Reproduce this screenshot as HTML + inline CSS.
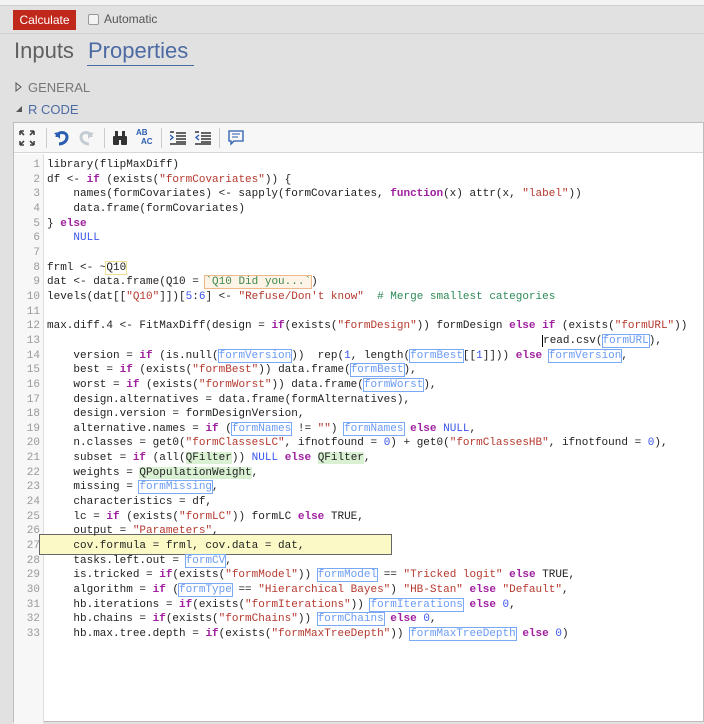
<!DOCTYPE html>
<html><head><meta charset="utf-8"><style>
*{margin:0;padding:0;box-sizing:border-box}
body{width:704px;height:713px;overflow:hidden;background:#e1e1e1;font-family:"Liberation Sans",sans-serif;position:relative}
.abs{position:absolute}
#top{left:0;top:0;width:704px;height:6px;background:#f2f2f2;border-bottom:1px solid #d0d0d0}
#btn{left:13px;top:10px;width:63px;height:20px;background:#c0281c;color:#fff;font-size:12px;line-height:20px;text-align:center}
#cb{left:88px;top:14px;width:11px;height:11px;border:1px solid #999;background:#f4f4f4;border-radius:2px}
#auto{left:104px;top:12px;font-size:12px;color:#555}
#hr1{left:0;top:33px;width:704px;height:1px;background:#d0d0d0}
#inp{left:14px;top:38px;font-size:22px;color:#606060}
#prop{left:88px;top:38px;font-size:22px;color:#4c6aa3}
#ul{left:87px;top:65px;width:107px;height:1px;background:#4c6aa3}
.sec{font-size:13px;color:#777}
#ed{left:13px;top:122px;width:691px;height:600px;border:1px solid #bdbdbd;background:#fff}
#tb{left:0;top:0;width:100%;height:30px;background:#f7f7f7;border-bottom:1px solid #d6d6d6}
.sep{position:absolute;top:5px;width:1px;height:20px;background:#ccc}
#gut{left:0;top:31px;width:30px;height:570px;background:#f7f7f7;border-right:1px solid #ddd}
#code{left:0;top:35px;font-family:"Liberation Mono",monospace;font-size:11px;line-height:14.65px;white-space:pre;color:#222}
.ln{display:inline-block;width:26px;text-align:right;color:#999;margin-right:7px}
.k{color:#a020a0;font-weight:bold}
.s{color:#b5392e}
.n{color:#3a55ee}
.c{color:#2e8b57}
.f{color:#6a9bf2;outline:1px solid #7aa9f5;outline-offset:0}
.g{background:#d9f0d3}
#hl{left:25px;top:411px;width:353px;height:21px;background:#fbf9c6;border:1px solid #666}
</style></head><body>
<div id="top" class="abs"></div>
<div id="btn" class="abs">Calculate</div>
<div id="cb" class="abs"></div>
<div id="auto" class="abs">Automatic</div>
<div id="hr1" class="abs"></div>
<div id="inp" class="abs">Inputs</div>
<div id="prop" class="abs">Properties</div>
<div id="ul" class="abs"></div>
<svg class="abs" style="left:15px;top:82px" width="8" height="10"><path d="M1 1 L6 5 L1 9 Z" fill="none" stroke="#555"/></svg>
<div class="abs sec" style="left:28px;top:80px">GENERAL</div>
<svg class="abs" style="left:15px;top:105px" width="8" height="8"><path d="M7 1 L7 7 L1 7 Z" fill="#555"/></svg>
<div class="abs sec" style="left:28px;top:102px;color:#4c6aa3">R CODE</div>
<div id="ed" class="abs">
 <div id="tb" class="abs">
  <svg class="abs" style="left:4px;top:6px" width="18" height="18" stroke="#444" stroke-width="1.6" fill="none"><path d="M2 2h4M2 2v4M2 2l4 4M16 2h-4M16 2v4M16 2l-4 4M2 16h4M2 16v-4M2 16l4-4M16 16h-4M16 16v-4M16 16l-4-4"/></svg>
  <div class="sep" style="left:32px"></div>
  <svg class="abs" style="left:40px;top:6px" width="16" height="17"><path d="M3 8 C3 2 13 2 13 8 C13 13 8 15 5 15" fill="none" stroke="#2a5db0" stroke-width="3"/><path d="M0 4 L6 10 L6 3 Z" fill="#2a5db0"/></svg>
  <svg class="abs" style="left:64px;top:6px" width="16" height="17"><path d="M13 8 C13 2 3 2 3 8 C3 13 8 15 11 15" fill="none" stroke="#c5cbd3" stroke-width="3"/><path d="M16 4 L10 10 L10 3 Z" fill="#c5cbd3"/></svg>
  <div class="sep" style="left:90px"></div>
  <svg class="abs" style="left:98px;top:7px" width="16" height="16" fill="#333"><rect x="1" y="6" width="6" height="9" rx="1"/><rect x="9" y="6" width="6" height="9" rx="1"/><rect x="3" y="1" width="3" height="6"/><rect x="10" y="1" width="3" height="6"/><rect x="6" y="6" width="4" height="4"/></svg>
  <div class="abs" style="left:122px;top:5px;font-size:8px;line-height:9px;color:#2a5db0;font-weight:bold">AB<br><span style="margin-left:5px">AC</span></div>
  <div class="sep" style="left:147px"></div>
  <svg class="abs" style="left:156px;top:8px" width="16" height="14" stroke="#333" stroke-width="1.4"><path d="M6 2h10M6 5h10M6 8h10M6 11h10M0 1h4M0 13h16"/><path d="M0 4l3 2.5L0 9" stroke="#2a5db0" fill="none"/></svg>
  <svg class="abs" style="left:181px;top:8px" width="16" height="14" stroke="#333" stroke-width="1.4"><path d="M6 2h10M6 5h10M6 8h10M6 11h10M0 1h4M0 13h16"/><path d="M4 4L1 6.5 4 9" stroke="#2a5db0" fill="none"/></svg>
  <div class="sep" style="left:205px"></div>
  <svg class="abs" style="left:214px;top:7px" width="16" height="16" fill="none" stroke="#2a5db0" stroke-width="1.3"><path d="M1 1h14v10H6l-3 3v-3H1z"/><path d="M4 4h8M4 7h6" stroke-width="1"/></svg>
 </div>
 <div id="gut" class="abs"></div>
 <div id="hl" class="abs"></div>
 <div id="code" class="abs"><span class="ln">1</span>library(flipMaxDiff)
<span class="ln">2</span>df &lt;- <span class="k">if</span> (exists(<span class="s">"formCovariates"</span>)) {
<span class="ln">3</span>    names(formCovariates) &lt;- sapply(formCovariates, <span class="k">function</span>(x) attr(x, <span class="s">"label"</span>))
<span class="ln">4</span>    data.frame(formCovariates)
<span class="ln">5</span>} <span class="k">else</span>
<span class="ln">6</span>    <span class="n">NULL</span>
<span class="ln">7</span>
<span class="ln">8</span>frml &lt;- ~<span style="outline:1px solid #f3e08a">Q10</span>
<span class="ln">9</span>dat &lt;- data.frame(Q10 = <span style="outline:1px solid #eeb98a;background:#fdf3e6;color:#3d8a4a">`Q10 Did you...`</span>)
<span class="ln">10</span>levels(dat[[<span class="s">"Q10"</span>]])[<span class="n">5</span>:<span class="n">6</span>] &lt;- <span class="s">"Refuse/Don't know"</span>  <span class="c"># Merge smallest categories</span>
<span class="ln">11</span>
<span class="ln">12</span>max.diff.4 &lt;- FitMaxDiff(design = <span class="k">if</span>(exists(<span class="s">"formDesign"</span>)) formDesign <span class="k">else</span> <span class="k">if</span> (exists(<span class="s">"formURL"</span>))
<span class="ln">13</span>                                                                           <span style="border-left:1px solid #000">read.csv(<span class="f">formURL</span>),</span>
<span class="ln">14</span>    version = <span class="k">if</span> (is.null(<span class="f">formVersion</span>))  rep(<span class="n">1</span>, length(<span class="f">formBest</span>[[<span class="n">1</span>]])) <span class="k">else</span> <span class="f">formVersion</span>,
<span class="ln">15</span>    best = <span class="k">if</span> (exists(<span class="s">"formBest"</span>)) data.frame(<span class="f">formBest</span>),
<span class="ln">16</span>    worst = <span class="k">if</span> (exists(<span class="s">"formWorst"</span>)) data.frame(<span class="f">formWorst</span>),
<span class="ln">17</span>    design.alternatives = data.frame(formAlternatives),
<span class="ln">18</span>    design.version = formDesignVersion,
<span class="ln">19</span>    alternative.names = <span class="k">if</span> (<span class="f">formNames</span> != <span class="s">""</span>) <span class="f">formNames</span> <span class="k">else</span> <span class="n">NULL</span>,
<span class="ln">20</span>    n.classes = get0(<span class="s">"formClassesLC"</span>, ifnotfound = <span class="n">0</span>) + get0(<span class="s">"formClassesHB"</span>, ifnotfound = <span class="n">0</span>),
<span class="ln">21</span>    subset = <span class="k">if</span> (all(<span class="g">QFilter</span>)) <span class="n">NULL</span> <span class="k">else</span> <span class="g">QFilter</span>,
<span class="ln">22</span>    weights = <span class="g">QPopulationWeight</span>,
<span class="ln">23</span>    missing = <span class="f">formMissing</span>,
<span class="ln">24</span>    characteristics = df,
<span class="ln">25</span>    lc = <span class="k">if</span> (exists(<span class="s">"formLC"</span>)) formLC <span class="k">else</span> TRUE,
<span class="ln">26</span>    output = <span class="s">"Parameters"</span>,
<span class="ln">27</span>    cov.formula = frml, cov.data = dat,
<span class="ln">28</span>    tasks.left.out = <span class="f">formCV</span>,
<span class="ln">29</span>    is.tricked = <span class="k">if</span>(exists(<span class="s">"formModel"</span>)) <span class="f">formModel</span> == <span class="s">"Tricked logit"</span> <span class="k">else</span> TRUE,
<span class="ln">30</span>    algorithm = <span class="k">if</span> (<span class="f">formType</span> == <span class="s">"Hierarchical Bayes"</span>) <span class="s">"HB-Stan"</span> <span class="k">else</span> <span class="s">"Default"</span>,
<span class="ln">31</span>    hb.iterations = <span class="k">if</span>(exists(<span class="s">"formIterations"</span>)) <span class="f">formIterations</span> <span class="k">else</span> <span class="n">0</span>,
<span class="ln">32</span>    hb.chains = <span class="k">if</span>(exists(<span class="s">"formChains"</span>)) <span class="f">formChains</span> <span class="k">else</span> <span class="n">0</span>,
<span class="ln">33</span>    hb.max.tree.depth = <span class="k">if</span>(exists(<span class="s">"formMaxTreeDepth"</span>)) <span class="f">formMaxTreeDepth</span> <span class="k">else</span> <span class="n">0</span>)
</div>
</div>
</body></html>
